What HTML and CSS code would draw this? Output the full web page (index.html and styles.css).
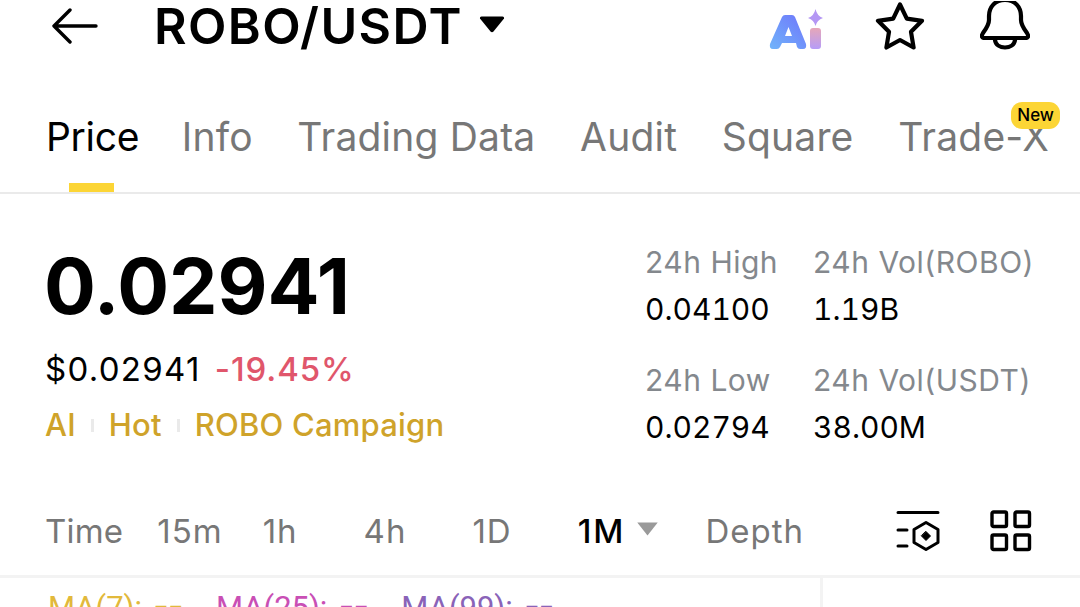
FILE: index.html
```html
<!DOCTYPE html>
<html lang="en">
<head>
    <meta charset="UTF-8">
    <meta name="viewport" content="width=device-width, initial-scale=1.0">
    <title>ROBO/USDT</title>
    <link rel="stylesheet" href="styles.css">
</head>
<body>

<div class="page">
    <!-- Top bar -->
    <div class="topbar">
        <svg class="back-icon" width="46" height="36" viewBox="0 0 46 36" fill="none" stroke="#000" stroke-width="3.4" stroke-linecap="round" stroke-linejoin="round">
            <path d="M44 18H2M18 2L2 18L18 34"/>
        </svg>
        <div class="pair">ROBO/USDT</div>
        <svg class="pair-caret" width="26" height="17" viewBox="0 0 26 17"><path d="M1 2.500Q0.500 0.500 2.500 0.500H23.500Q25.500 0.500 25 2.500L14.500 15.500Q13 17 11.500 15.500Z" fill="#000"/></svg>
        <div class="top-icons">
            <svg class="ai-icon" width="54" height="52" viewBox="0 0 54 52">
                <defs>
                    <linearGradient id="aiA" x1="0" y1="1" x2="1" y2="0">
                        <stop offset="0" stop-color="#70b4fa"/>
                        <stop offset="1" stop-color="#6f75fb"/>
                    </linearGradient>
                    <linearGradient id="aiI" x1="0" y1="0" x2="0" y2="1">
                        <stop offset="0" stop-color="#e6a7b8"/>
                        <stop offset="1" stop-color="#b69cf8"/>
                    </linearGradient>
                </defs>
                <path d="M13 17Q14 15 16 15H23Q25 15 26 17L37 44Q38 49 34 49H31Q29 49 28 47L27 43H13L11 47Q10 49 8 49H4Q0 49 1 44ZM19.500 27L16 36H23Z" fill="url(#aiA)" fill-rule="evenodd"/>
                <rect x="41" y="28" width="11" height="21" rx="3" fill="url(#aiI)"/>
                <path d="M46.500 9Q48 16 54 18Q48 20 46.500 26Q45 20 39 18Q45 16 46.500 9Z" fill="#b497f4"/>
            </svg>
            <svg class="star-icon" width="50" height="48" viewBox="0 0 50 48" fill="none" stroke="#000" stroke-width="4.200" stroke-linejoin="round">
                <path d="M25 2.500L31.800 16.600L47 18.800L36 29.800L38.600 45.500L25 38L11.400 45.500L14 29.800L3 18.800L18.200 16.600Z"/>
            </svg>
            <svg class="bell-icon" width="50" height="50" viewBox="0 0 50 50" fill="none" stroke="#000" stroke-width="4.200" stroke-linejoin="round" stroke-linecap="round">
                <path d="M25 -1C15 -1 9 6 9 15V19C9 24 6 28 3 32Q0 37 5 37H45Q50 37 47 32C44 28 41 24 41 19V15C41 6 35 -1 25 -1Z"/>
                <path d="M15 39C16 49 34 49 35 39"/>
            </svg>
        </div>
    </div>

    <!-- Section tabs -->
    <div class="tabs">
        <div class="tab active">Price</div>
        <div class="tab">Info</div>
        <div class="tab">Trading Data</div>
        <div class="tab">Audit</div>
        <div class="tab">Square</div>
        <div class="tab tab-new">Trade-X<span class="new-badge">New</span></div>
    </div>

    <!-- Price summary -->
    <div class="summary">
        <div class="summary-left">
            <div class="last-price">0.02941</div>
            <div class="price-line">
                <span class="fiat-price">$0.02941</span>
                <span class="change">-19.45%</span>
            </div>
            <div class="tags">
                <span>AI</span>
                <i class="tag-sep"></i>
                <span>Hot</span>
                <i class="tag-sep"></i>
                <span>ROBO Campaign</span>
            </div>
        </div>
        <div class="stats">
            <div class="stat">
                <div class="stat-label">24h High</div>
                <div class="stat-value">0.04100</div>
            </div>
            <div class="stat">
                <div class="stat-label">24h Vol(ROBO)</div>
                <div class="stat-value">1.19B</div>
            </div>
            <div class="stat">
                <div class="stat-label">24h Low</div>
                <div class="stat-value">0.02794</div>
            </div>
            <div class="stat">
                <div class="stat-label">24h Vol(USDT)</div>
                <div class="stat-value">38.00M</div>
            </div>
        </div>
    </div>

    <!-- Chart toolbar -->
    <div class="chart-bar">
        <div class="range r-time">Time</div>
        <div class="range r-15m">15m</div>
        <div class="range r-1h">1h</div>
        <div class="range r-4h">4h</div>
        <div class="range r-1d">1D</div>
        <div class="range r-1m active">1M</div>
        <svg class="range-caret" width="23" height="14" viewBox="0 0 21 13"><path d="M1 0.500H20L10.500 12.500Z" fill="#9a9a9a"/></svg>
        <div class="range r-depth">Depth</div>
        <svg class="tool-icon" width="44" height="42" viewBox="0 0 44 42" fill="none" stroke="#000" stroke-width="3" stroke-linecap="round" stroke-linejoin="round">
            <path d="M2 2.500H42M2 20H11M2 36H11"/>
            <path d="M30 12.500L42 19.500V32.500L30 39.500L18 32.500V19.500Z"/>
            <path d="M30 21.500L34.500 26L30 30.500L25.500 26Z" fill="#000" stroke-width="1"/>
        </svg>
        <svg class="grid-icon" width="42" height="42" viewBox="0 0 42 42" fill="none" stroke="#000" stroke-width="3.400" stroke-linejoin="round">
            <rect x="2" y="2" width="14.500" height="14.500" rx="1.500"/>
            <rect x="25" y="2" width="14.500" height="14.500" rx="1.500"/>
            <rect x="2" y="25" width="14.500" height="14.500" rx="1.500"/>
            <rect x="25" y="25" width="14.500" height="14.500" rx="1.500"/>
        </svg>
    </div>

    <!-- Chart area, cut off by the window -->
    <div class="chart">
        <div class="ma-legend">
            <span class="ma7">MA(7): <span class="ma-dash">--</span></span>
            <span class="ma25">MA(25): <span class="ma-dash">--</span></span>
            <span class="ma99">MA(99): <span class="ma-dash">--</span></span>
        </div>
        <div class="chart-side"></div>
    </div>
</div>

</body>
</html>
```

FILE: styles.css
```css
* {
    box-sizing: border-box;
}

html, body {
    margin: 0;
    padding: 0;
    background-color: #fff;
}

body {
    font-family: "Inter", "Lato", sans-serif;
    color: #000;
}

.page {
    width: 1080px;
    height: 607px;
    overflow: hidden;
}

/* top bar */
.topbar {
    display: flex;
    align-items: center;
    height: 52px;
    padding-left: 52px;
}

.pair {
    margin-left: 56px;
    margin-top: -1px;
    font-size: 50px;
    font-weight: 600;
    letter-spacing: 1.4px;
    line-height: 52px;
}

.pair-caret {
    margin-left: 16px;
    margin-top: -4px;
}

.top-icons {
    display: flex;
    align-items: center;
    margin-left: auto;
    padding-right: 50px;
}

.ai-icon {
    margin-right: 52px;
}

.bell-icon {
    margin-left: 55px;
}

/* section tabs */
.tabs {
    display: flex;
    gap: 44.6px;
    height: 142px;
    padding: 62px 0 0 46px;
    border-bottom: 2px solid #eaeaea;
}

.tab {
    position: relative;
    height: 78px;
    font-size: 39px;
    letter-spacing: 0.2px;
    line-height: 46px;
    color: #777;
}

.tab.active {
    margin-right: -2px;
    color: #000;
    letter-spacing: -0.3px;
}

.tab.active::after {
    content: "";
    position: absolute;
    left: 23px;
    bottom: 0;
    width: 45px;
    height: 9px;
    background-color: #fcd535;
}

.new-badge {
    position: absolute;
    top: -12px;
    right: -11px;
    height: 27px;
    padding: 0 6px;
    border-radius: 11px;
    background-color: #fcd535;
    color: #000;
    font-size: 17px;
    font-weight: 500;
    letter-spacing: 0;
    line-height: 27px;
}

/* price summary */
.summary {
    display: flex;
    height: 308px;
}

.summary-left {
    width: 645px;
    padding: 47px 0 0 44px;
}

.last-price {
    font-size: 77px;
    font-weight: 700;
    line-height: 90px;
}

.price-line {
    display: flex;
    gap: 14px;
    margin-top: 16px;
    padding-left: 1px;
    line-height: 44px;
}

.fiat-price {
    font-size: 33px;
    letter-spacing: 1.3px;
}

.change {
    font-size: 33px;
    font-weight: 500;
    letter-spacing: 0.9px;
    color: #e0566b;
}

.tags {
    display: flex;
    align-items: center;
    gap: 15px;
    margin-top: 14px;
    padding-left: 1px;
    font-size: 31px;
    font-weight: 500;
    letter-spacing: 0.2px;
    line-height: 40px;
    color: #cfa32a;
}

.tag-sep {
    width: 3px;
    height: 13px;
    background-color: #eaeaea;
}

.stats {
    display: grid;
    grid-template-columns: 168px auto;
    grid-auto-rows: 118px;
    padding-top: 46px;
}

.stat-label {
    font-size: 30px;
    letter-spacing: 0.5px;
    line-height: 44px;
    color: #84888d;
}

.stat-value {
    margin-top: 3px;
    font-size: 30px;
    font-variant-numeric: tabular-nums;
    line-height: 44px;
}

/* chart toolbar */
.chart-bar {
    display: flex;
    align-items: center;
    height: 76px;
    padding-bottom: 15px;
    border-bottom: 3px solid #f3f3f3;
}

.range {
    font-size: 33px;
    letter-spacing: 1px;
    color: #777;
}

.range.active {
    color: #000;
    font-weight: 500;
    letter-spacing: 2px;
}

.r-time { margin-left: 45px; letter-spacing: 0.2px; }
.r-15m { margin-left: 34px; }
.r-1h { margin-left: 40px; }
.r-4h { margin-left: 66px; }
.r-1d { margin-left: 66px; }
.r-1m { margin-left: 66px; }

.range-caret {
    margin-left: 11px;
    margin-top: -5px;
}

.r-depth {
    margin-left: 46px;
}

.tool-icon {
    margin-left: auto;
}

.grid-icon {
    margin-left: 50px;
    margin-right: 48px;
}

/* chart */
.chart {
    display: flex;
    height: 40px;
}

.ma-legend {
    display: flex;
    gap: 32px;
    width: 823px;
    padding: 14px 0 0 48px;
    font-family: "Roboto", sans-serif;
    font-size: 31px;
    line-height: 32px;
    white-space: nowrap;
    border-right: 3px solid #f3f3f3;
}

.ma-dash {
    position: relative;
    top: 3px;
    margin-left: 5px;
    font-size: 46px;
    font-weight: 300;
    letter-spacing: 1.5px;
    line-height: 0;
}

.ma7 { color: #e2b93b; }
.ma25 { color: #c94fb5; }
.ma99 { color: #8a63b8; }
```
